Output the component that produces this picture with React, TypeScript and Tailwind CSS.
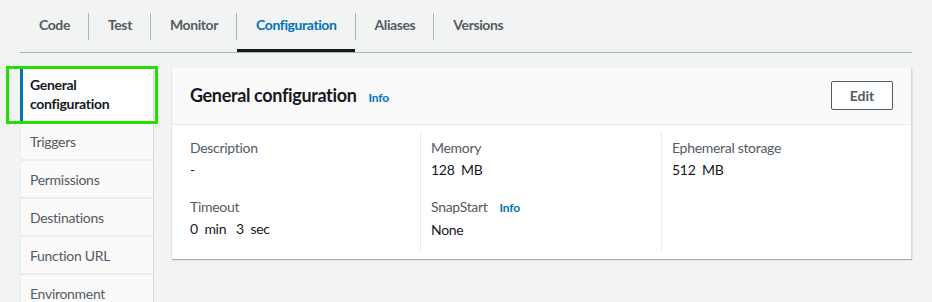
import React from 'react'

const TABS = ['Code', 'Test', 'Monitor', 'Configuration', 'Aliases', 'Versions']
const ACTIVE_TAB = 'Configuration'

const NAV_ITEMS = ['Triggers', 'Permissions', 'Destinations', 'Function URL', 'Environment']

const Info = () => (
  <span className="ml-3 text-[12px] font-bold tracking-[-0.2px] text-[#0073bb]">Info</span>
)

const Field = ({ label, value, info }: { label: string; value: string; info?: boolean }) => (
  <div className="flex flex-col">
    <div className="flex items-baseline text-[14px] leading-[20px] tracking-[-0.3px] text-[#545b64]">
      <span>{label}</span>
      {info && <Info />}
    </div>
    <div className="mt-[2px] whitespace-pre text-[14px] leading-[20px] tracking-[-0.3px] text-[#16191f]">
      {value}
    </div>
  </div>
)

const App = () => {
  return (
    <div
      className="h-[302px] w-[932px] overflow-hidden bg-[#f2f3f3] px-5"
      style={{ fontFamily: 'Lato, "Liberation Sans", sans-serif' }}
    >
      {/* tabs */}
      <div className="flex h-[53px] items-stretch border-b border-[#aab7b8]">
        {TABS.map((tab, i) => (
          <div key={tab} className="flex items-stretch">
            {i > 0 && <div className="mt-[13px] h-[27px] w-px bg-[#aab7b8]" />}
            <div
              className={
                tab === ACTIVE_TAB
                  ? 'relative flex items-center pl-[19px] pr-[18px] pb-[4px] text-[14px] font-bold tracking-[-0.4px] text-[#0073bb]'
                  : 'flex items-center pl-[19px] pr-[18px] pb-[4px] text-[14px] font-bold tracking-[-0.4px] text-[#545b64]'
              }
            >
              {tab}
              {tab === ACTIVE_TAB && (
                <span className="absolute bottom-0 left-0 right-0 h-[3px] bg-[#16191f]" />
              )}
            </div>
          </div>
        ))}
      </div>

      <div className="mt-[14px] flex gap-[18px]">
        {/* side nav */}
        <div className="flex w-[134px] shrink-0 flex-col border-r border-[#d5dbdb]">
          <div className="relative flex flex-col border-l-[3px] border-[#0073bb] bg-white py-[8px] pl-[7px] text-[14px] font-bold leading-[19px] tracking-[-0.3px] text-[#16191f]">
            <span>General</span>
            <span>configuration</span>
            <span className="pointer-events-none absolute -top-[1px] -left-[17px] -right-[5px] -bottom-[3px] border-[3px] border-[#22e000]" />
          </div>
          {NAV_ITEMS.map(item => (
            <div
              key={item}
              className="flex h-[38px] items-center border-l border-t-2 border-[#eaeded] bg-[#fafafa] pl-[9px] text-[14px] tracking-[-0.3px] text-[#545b64]"
            >
              {item}
            </div>
          ))}
        </div>

        {/* card */}
        <div className="mt-px h-[191px] flex-1 border-r border-[#d5dbdb] bg-white shadow-[0_1px_1px_0_rgba(0,28,36,0.3)]">
          <div className="flex h-[57px] items-center justify-between border-b border-[#eaeded] bg-[#fafafa] px-[18px] pb-[2px]">
            <div className="flex items-baseline">
              <span className="text-[18px] font-bold tracking-[-0.35px] text-[#16191f]">
                General configuration
              </span>
              <Info />
            </div>
            <button className="h-[29px] w-[62px] rounded-[2px] border border-[#545b64] bg-white text-[14px] font-bold text-[#545b64]">
              Edit
            </button>
          </div>
          <div className="grid grid-cols-[248px_241px_1fr] pt-[6px]">
            <div className="flex h-[120px] flex-col gap-[17px] pl-[18px] pt-[7px]">
              <Field label="Description" value="-" />
              <Field label="Timeout" value="0  min   3  sec" />
            </div>
            <div className="flex h-[120px] flex-col gap-[17px] border-l border-[#eaeded] pl-[10px] pt-[7px]">
              <Field label="Memory" value="128  MB" />
              <Field label="SnapStart" value="None" info />
            </div>
            <div className="flex h-[120px] flex-col gap-[17px] border-l border-[#eaeded] pl-[10px] pt-[7px]">
              <Field label="Ephemeral storage" value="512  MB" />
            </div>
          </div>
        </div>
      </div>
    </div>
  )
}

export default App
